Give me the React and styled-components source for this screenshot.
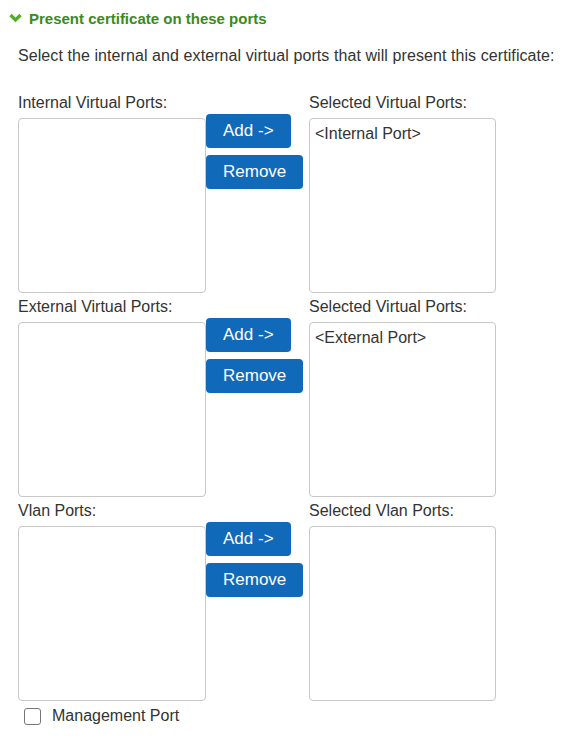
import React from 'react'
import styled, { createGlobalStyle } from 'styled-components'

const GlobalStyle = createGlobalStyle`
  body {
    margin: 0;
    background: #fff;
    font-family: "Liberation Sans", Arial, sans-serif;
    color: #333;
  }
`

const Panel = styled.div`
  padding: 8px 0 0 9px;
`

const Header = styled.div`
  display: flex;
  align-items: center;
  gap: 7px;
  font-size: 15px;
  font-weight: bold;
  color: #3a8a1c;
  height: 20px;
`

const Body = styled.div`
  padding: 0 0 0 9px;
`

const Intro = styled.p`
  margin: 18px 0 27px;
  font-size: 16px;
  line-height: 20px;
  letter-spacing: 0.08px;
`

const Group = styled.div`
  display: grid;
  grid-template-columns: 188px 103px 187px;
  grid-template-rows: 18px 175px;
  row-gap: 7px;
  margin-bottom: 4px;
`

const Label = styled.div`
  font-size: 16px;
  line-height: 20px;
  grid-column: ${p => p.$col};
`

const ListBox = styled.div`
  box-sizing: border-box;
  border: 1px solid #c8c8c8;
  border-radius: 4px;
  padding: 5px 5px;
  font-size: 16px;
  line-height: 20px;
  grid-column: ${p => p.$col};
  grid-row: 2;
`

const Buttons = styled.div`
  grid-column: 2;
  grid-row: 2;
  display: flex;
  flex-direction: column;
  align-items: flex-start;
  gap: 7px;
  margin: -4px 0 0 0;
`

const Btn = styled.button`
  background: #1169b9;
  color: #fff;
  border: none;
  border-radius: 4px;
  height: 34px;
  padding: 0 17px;
  font-family: "Liberation Sans", Arial, sans-serif;
  font-size: 17px;
  cursor: pointer;
`

const CheckRow = styled.label`
  display: flex;
  align-items: center;
  gap: 11px;
  margin: 0 0 0 6px;
  font-size: 16px;
  line-height: 22px;
`

const CheckBox = styled.span`
  box-sizing: border-box;
  width: 17px;
  height: 17px;
  border: 1px solid #767676;
  border-radius: 3px;
  background: #fff;
`

const Chevron = () => (
  <svg width="13" height="10" viewBox="0 0 13 10">
    <path d="M1.5 2 L6.5 7 L11.5 2" fill="none" stroke="#4fae2a" strokeWidth="3.2" />
  </svg>
)

const groups = [
  { left: 'Internal Virtual Ports:', right: 'Selected Virtual Ports:', item: '<Internal Port>' },
  { left: 'External Virtual Ports:', right: 'Selected Virtual Ports:', item: '<External Port>' },
  { left: 'Vlan Ports:', right: 'Selected Vlan Ports:', item: null },
]

export default function App() {
  return (
    <>
      <GlobalStyle />
      <Panel>
        <Header>
          <Chevron />
          Present certificate on these ports
        </Header>
        <Body>
          <Intro>Select the internal and external virtual ports that will present this certificate:</Intro>
          {groups.map((g, i) => (
            <Group key={i}>
              <Label $col={1}>{g.left}</Label>
              <Label $col={3}>{g.right}</Label>
              <ListBox $col={1} />
              <Buttons>
                <Btn>Add -&gt;</Btn>
                <Btn>Remove</Btn>
              </Buttons>
              <ListBox $col={3}>{g.item}</ListBox>
            </Group>
          ))}
          <CheckRow>
            <CheckBox />
            Management Port
          </CheckRow>
        </Body>
      </Panel>
    </>
  )
}
